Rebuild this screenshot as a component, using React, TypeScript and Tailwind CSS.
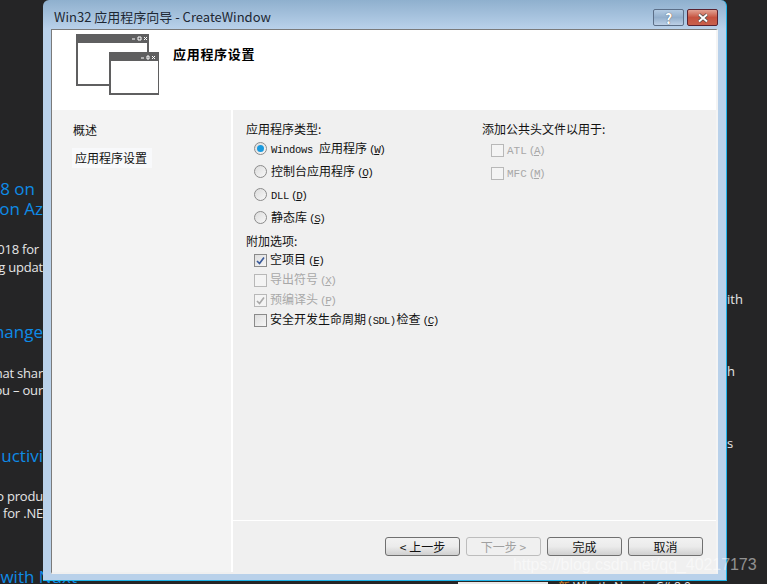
import type { ReactNode } from "react"

const CJK = "font-['Noto_Sans_CJK_SC','Liberation_Sans',sans-serif]"
const MONO = "font-['Liberation_Mono',monospace]"

function Key({ k }: { k: string }) {
  return (
    <span className={`${MONO} ml-[2px] text-[11px] tracking-[-1.5px]`}>
      (<span className="underline">{k}</span>)
    </span>
  )
}

function Radio({ checked, label, latin, k }: { checked?: boolean; label: string; latin?: string; k: string }) {
  return (
    <div className="flex h-[23px] items-center gap-[3px]">
      <span className="flex h-[13px] w-[13px] items-center justify-center rounded-full border border-[#8b8b8b] bg-gradient-to-br from-[#dcdcdc] to-[#f8f8f8]">
        {checked && <span className="h-[7px] w-[7px] rounded-full bg-[#1a9ade]" />}
      </span>
      <span className="ml-[1px] whitespace-pre text-[12px] text-[#111]">
        {latin && <span className={`${MONO} text-[10.5px] tracking-[-0.3px]`}>{latin}</span>}
        {label}
        <Key k={k} />
      </span>
    </div>
  )
}

function Check({
  checked,
  disabled,
  label,
  k,
}: {
  checked?: boolean
  disabled?: boolean
  label: ReactNode
  k: string
}) {
  return (
    <div className="flex h-[20px] items-center gap-[3px]">
      <span
        className={`flex h-[13px] w-[13px] items-center justify-center border ${
          disabled ? "border-[#b8b8b8] bg-[#f4f4f4]" : "border-[#8a8a8a] bg-gradient-to-br from-[#dedede] to-[#f6f6f6]"
        }`}
      >
        {checked && (
          <svg viewBox="0 0 11 11" className="h-[11px] w-[11px]">
            <path
              d="M2 6 L4.5 8.5 L9 2.5"
              fill="none"
              stroke={disabled ? "#a9a9a9" : "#3a5a9a"}
              strokeWidth="1.7"
            />
          </svg>
        )}
      </span>
      <span className={`whitespace-pre text-[12px] ${disabled ? "text-[#a8a8a8]" : "text-[#111]"}`}>
        {label}
        <Key k={k} />
      </span>
    </div>
  )
}

function WizardButton({ label, disabled }: { label: string; disabled?: boolean }) {
  return (
    <button
      className={`flex h-[19px] w-[75px] items-center justify-center rounded-[3px] border text-[12px] ${
        disabled
          ? "border-[#bdbdbd] bg-[#f0f0f0] text-[#a0a0a0]"
          : "border-[#707070] bg-gradient-to-b from-[#f2f2f2] via-[#ebebeb] to-[#d0d0d0] text-[#111]"
      }`}
    >
      {label}
    </button>
  )
}

function WindowsIcon() {
  return (
    <svg width="83" height="62" viewBox="0 0 83 62" className="shrink-0">
      <rect x="1" y="1" width="71" height="50" fill="#fff" stroke="#5f5f60" strokeWidth="2" />
      <rect x="0" y="0" width="73" height="9" fill="#5f5f60" />
      <rect x="34" y="19" width="49" height="41" fill="#fff" />
      <rect x="34" y="19" width="49" height="41" fill="#fff" stroke="#5f5f60" strokeWidth="2" />
      <rect x="33" y="18" width="49" height="9" fill="#5f5f60" />
      <path d="M56 5h3M62 3h3v3h-3zM68 3l3 3m0-3l-3 3" stroke="#fff" fill="none" />
      <path d="M65 24h3M71 22h2v3h-2zM76 22l3 3m0-3l-3 3" stroke="#fff" fill="none" />
    </svg>
  )
}

const BG_TEXT: { text: string; right: number; top: number; big?: boolean }[] = [
  { text: "8 on", right: 732, top: 179, big: true },
  { text: "on Az", right: 724, top: 199, big: true },
  { text: "018 for", right: 728, top: 241 },
  { text: "g updat", right: 724, top: 259 },
  { text: "hange", right: 724, top: 322, big: true },
  { text: "hat shar", right: 724, top: 365 },
  { text: "ou – our", right: 724, top: 382 },
  { text: "uctivi", right: 724, top: 446, big: true },
  { text: "o produ", right: 724, top: 488 },
  { text: "for .NE", right: 724, top: 505 },
  { text: "with Nuxt", right: 690, top: 567, big: true },
]

export default function App() {
  return (
    <div className={`relative h-[584px] w-[767px] overflow-hidden bg-[#252526] ${CJK}`}>
      {/* page behind the dialog */}
      {BG_TEXT.map((t) => (
        <span
          key={t.text}
          style={{ right: t.right, top: t.top }}
          className={`absolute whitespace-nowrap font-['Open_Sans',sans-serif] ${
            t.big
              ? "text-[17px] leading-[20px] text-[#0e8be6]"
              : "text-[13px] leading-[16px] tracking-[-0.2px] text-[#e6e6e6]"
          }`}
        >
          {t.text}
        </span>
      ))}
      <span className="absolute left-[717px] top-[291px] font-['Open_Sans',sans-serif] text-[13px] leading-[16px] text-[#e6e6e6]">
        with
      </span>
      <span className="absolute left-[727px] top-[363px] font-['Open_Sans',sans-serif] text-[13px] leading-[16px] text-[#e6e6e6]">
        h
      </span>
      <span className="absolute left-[727px] top-[435px] font-['Open_Sans',sans-serif] text-[13px] leading-[16px] text-[#e6e6e6]">
        s
      </span>
      <div className="absolute left-[458px] top-[582px] h-[2px] w-[90px] bg-[#e8e8e8]" />
      <span className="absolute left-[558px] top-[579px] whitespace-nowrap font-['Open_Sans',sans-serif] text-[12px] leading-[16px] text-[#e6e6e6]">
        <span className="text-[#e08a2c]">新</span> What's New in C# 8.0
      </span>

      {/* dialog */}
      <div className="absolute left-[43px] top-0 flex h-[581px] w-[684px] flex-col rounded-t-[6px] border-b border-r border-b-[#1fb4e8] border-r-[#1fb4e8] bg-gradient-to-b from-[#8fb0ce] from-0% via-[#b9d1ea] via-[5%] to-[#b9d1ea] px-[8px] pb-[6px]">
        <div className="flex h-[29px] shrink-0 items-center justify-between">
          <span className="pl-[3px] pt-[4px] text-[13px] text-[#1d2733]">Win32 应用程序向导 - CreateWindow</span>
          <div className="mt-[6px] flex gap-[3px]">
            <span className="flex h-[17px] w-[31px] items-center justify-center rounded-[2px] border border-[#5c6f88] bg-gradient-to-b from-[#b3cbe3] via-[#93afcc] to-[#bcd0e6] text-[14px] font-bold leading-none text-white [text-shadow:0_0_1px_#333]">
              ?
            </span>
            <span className="flex h-[17px] w-[31px] items-center justify-center rounded-[2px] border border-[#5a2230] bg-gradient-to-b from-[#e2a294] via-[#c5523f] to-[#c8604c]">
              <svg width="12" height="10" viewBox="0 0 12 10">
                <path d="M2 1.5 L10 8.5 M10 1.5 L2 8.5" stroke="#4a4a4a" strokeWidth="3.4" />
                <path d="M2 1.5 L10 8.5 M10 1.5 L2 8.5" stroke="#fff" strokeWidth="2" />
              </svg>
            </span>
          </div>
        </div>

        <div className="flex min-h-0 flex-1 flex-col border-b-2 border-l border-r-2 border-t border-b-[#f0f0f0] border-l-[#7a7a7a] border-r-[#f4f4f4] border-t-[#7a7a7a] bg-white">
          <div className="flex h-[80px] shrink-0 gap-[14px] bg-white pl-[24px] pt-[4px]">
            <WindowsIcon />
            <span className="pt-[10px] text-[13px] font-bold tracking-[0.7px] text-black">应用程序设置</span>
          </div>

          <div className="flex min-h-0 flex-1">
            <div className="flex w-[179px] shrink-0 flex-col bg-[#f3f3f3] pl-[21px] pt-[11px] text-[12px] text-[#111]">
              <span className="h-[18px] leading-[18px]">概述</span>
              <span className="-ml-[1px] mt-[9px] w-[80px] bg-[#f8f9fb] px-[3px] leading-[20px]">应用程序设置</span>
            </div>
            <div className="w-[2px] shrink-0 bg-white" />
            <div className="flex min-w-0 flex-1 flex-col bg-[#f0f0f0]">
              <div className="flex flex-1 pl-[13px] pt-[10px]">
                <div className="flex w-[236px] flex-col">
                  <span className="h-[17px] text-[12px] leading-[17px] text-[#111]">应用程序类型:</span>
                  <div className="flex flex-col pl-[8px]">
                    <Radio checked latin="Windows " label="应用程序" k="W" />
                    <Radio label="控制台应用程序" k="O" />
                    <Radio latin="DLL" label="" k="D" />
                    <Radio label="静态库" k="S" />
                  </div>
                  <span className="mt-[3px] h-[17px] text-[12px] leading-[17px] text-[#111]">附加选项:</span>
                  <div className="flex flex-col pl-[8px] pt-[1px]">
                    <Check checked label="空项目" k="E" />
                    <Check disabled label="导出符号" k="X" />
                    <Check checked disabled label="预编译头" k="P" />
                    <Check
                      label={
                        <>
                          安全开发生命周期<span className={`${MONO} mx-[1px] text-[10.5px] tracking-[-0.6px]`}>(SDL)</span>检查
                        </>
                      }
                      k="C"
                    />
                  </div>
                </div>
                <div className="flex flex-col">
                  <span className="h-[17px] text-[12px] leading-[17px] text-[#111]">添加公共头文件以用于:</span>
                  <div className="flex flex-col pl-[9px] pt-[2px]">
                    <div className="flex h-[23px] items-center gap-[3px]">
                      <span className="h-[13px] w-[13px] border border-[#b8b8b8] bg-[#f4f4f4]" />
                      <span className="whitespace-pre text-[11px] text-[#a8a8a8]">
                        <span className={MONO}>ATL</span>
                        <Key k="A" />
                      </span>
                    </div>
                    <div className="flex h-[23px] items-center gap-[3px]">
                      <span className="h-[13px] w-[13px] border border-[#b8b8b8] bg-[#f4f4f4]" />
                      <span className="whitespace-pre text-[11px] text-[#a8a8a8]">
                        <span className={MONO}>MFC</span>
                        <Key k="M" />
                      </span>
                    </div>
                  </div>
                </div>
              </div>
              <div className="flex h-[52px] shrink-0 items-start justify-end gap-[6px] border-t border-t-white pr-[13px] pt-[16px]">
                <WizardButton label="< 上一步" />
                <WizardButton disabled label="下一步 >" />
                <WizardButton label="完成" />
                <WizardButton label="取消" />
              </div>
            </div>
          </div>
        </div>
      </div>

      {/* blog watermark */}
      <span className="absolute left-[513px] top-[555px] whitespace-nowrap font-['Liberation_Sans',sans-serif] text-[16px] leading-[20px] tracking-[-0.06px] text-white/50">
        https://blog.csdn.net/qq_40217173
      </span>
    </div>
  )
}
